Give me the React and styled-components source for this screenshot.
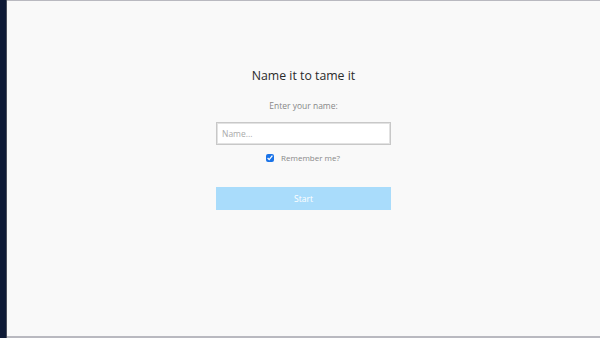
import React from 'react'
import styled, { createGlobalStyle } from 'styled-components';

const Global = createGlobalStyle`
  html, body { margin: 0; padding: 0; }
  body {
    font-family: "Open Sans", "Liberation Sans", sans-serif;
    background: #f9f9f9;
  }
  * { box-sizing: border-box; }
`;

const Shell = styled.div`
  display: flex;
  width: 600px;
  height: 338px;
`;

const Sidebar = styled.div`
  width: 7px;
  background: #0e1a36;
  border-right: 1px solid #4a4f5c;
`;

const Main = styled.main`
  flex: 1;
  background: #f9f9f9;
  border-top: 1px solid #b9b9c0;
  border-bottom: 2px solid #b9b9c0;
  display: flex;
  flex-direction: column;
  align-items: center;
  padding-top: 66px;
`;

const Title = styled.h1`
  margin: 0;
  font-size: 12.3px;
  font-weight: 400;
  color: #2b2b2b;
  line-height: 18px;
`;

const Label = styled.label`
  margin-top: 15px;
  font-size: 8.5px;
  color: #888;
  line-height: 12px;
`;

const NameInput = styled.input`
  margin-top: 10px;
  width: 175px;
  height: 23px;
  border: 1px solid #c8c8c8;
  box-shadow: inset 0 0 0 1px #e2e2e2;
  background: #fff;
  padding: 0 5px;
  font-family: inherit;
  font-size: 8.5px;
  color: #333;
  outline: none;
  &::placeholder { color: #aaa; }
`;

const CheckRow = styled.label`
  margin-top: 7px;
  display: flex;
  align-items: center;
  gap: 7px;
  font-size: 8px;
  color: #888;
  margin-left: -1px;
`;

const Check = styled.input`
  margin: 0;
  width: 8px;
  height: 8px;
  accent-color: #1a73e8;
`;

const StartButton = styled.button`
  margin-top: 24px;
  width: 175px;
  height: 23px;
  border: none;
  background: #a9dcfb;
  color: #fff;
  font-family: inherit;
  font-size: 8.5px;
`;

export default function App() {
  return (
    <>
      <Global />
      <Shell>
        <Sidebar />
        <Main>
          <Title>Name it to tame it</Title>
          <Label htmlFor="name">Enter your name:</Label>
          <NameInput id="name" placeholder="Name..." />
          <CheckRow>
            <Check type="checkbox" defaultChecked />
            Remember me?
          </CheckRow>
          <StartButton disabled>Start</StartButton>
        </Main>
      </Shell>
    </>
  )
}
